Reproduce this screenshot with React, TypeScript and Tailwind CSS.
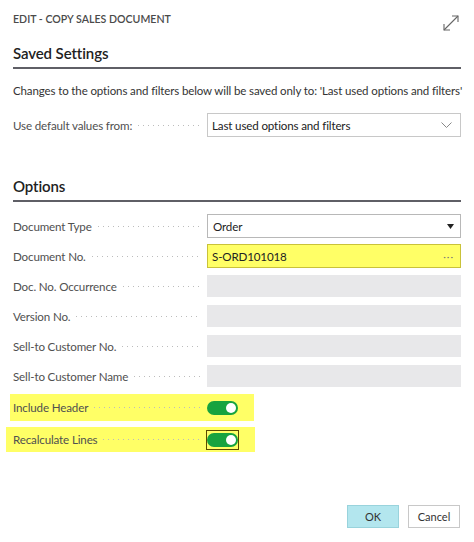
import React from "react";

const font = { fontFamily: 'Lato, "Noto Sans", sans-serif' };

const Leader = () => (
  <div className="flex-1 h-px mx-[6px] bg-[repeating-linear-gradient(90deg,#bcbcbc_0_1px,transparent_1px_5px)]" />
);

const Label = ({ text }: { text: string }) => (
  <div className="flex items-center w-[194px] shrink-0 text-[11.6px] tracking-[-0.15px] text-[#505050] whitespace-nowrap">
    <span>{text}</span>
    <Leader />
  </div>
);

const Heading = ({ text }: { text: string }) => (
  <div className="border-b-2 border-[#5f5f66] pb-[3px] text-[15px] leading-[22px] tracking-[-0.1px] text-[#212121] font-semibold">
    {text}
  </div>
);

const Toggle = ({ focused }: { focused?: boolean }) => (
  <div
    className={`flex items-center justify-center w-[33px] h-[20px] -ml-[1px] ${
      focused ? "border border-[#5a4a00]" : ""
    }`}
  >
    <div className="flex items-center justify-end w-[31px] h-[14px] rounded-full bg-[#17a33f] pr-[2px]">
      <div className="w-[10px] h-[10px] rounded-full bg-white" />
    </div>
  </div>
);

const readOnly = ["Doc. No. Occurrence", "Version No.", "Sell-to Customer No.", "Sell-to Customer Name"];

export default function App() {
  return (
    <div className="w-[474px] h-[542px] bg-white px-[13px] pt-[10px] overflow-hidden" style={font}>
      <div className="flex items-start justify-between">
        <div className="text-[10.6px] font-semibold text-[#4a4a4a] pt-[2px]">EDIT - COPY SALES DOCUMENT</div>
        <svg width="18" height="18" viewBox="0 0 18 18" className="mt-[4px] mr-[1px]" fill="none" stroke="#666" strokeWidth="1.1">
          <path d="M2 16 L16 2" />
          <path d="M10 2 H16 V8" />
          <path d="M2 10 V16 H8" />
        </svg>
      </div>

      <div className="mt-[10px]">
        <Heading text="Saved Settings" />
      </div>
      <div className="mt-[13px] text-[11.5px] tracking-[-0.12px] text-[#333] whitespace-nowrap">
        Changes to the options and filters below will be saved only to: 'Last used options and filters'
      </div>

      <div className="flex items-center mt-[14px] h-[24px]">
        <Label text="Use default values from:" />
        <div className="flex items-center justify-between flex-1 h-[24px] border border-[#c8c8c8] pl-[4px] pr-[8px] text-[11.6px] tracking-[-0.15px] text-[#222]">
          <span>Last used options and filters</span>
          <svg width="11" height="7" viewBox="0 0 11 7" fill="none" stroke="#888" strokeWidth="1">
            <path d="M0.5 0.5 L5.5 5.5 L10.5 0.5" />
          </svg>
        </div>
      </div>

      <div className="mt-[38px]">
        <Heading text="Options" />
      </div>

      <div className="flex flex-col gap-[6px] mt-[12px]">
        <div className="flex items-center h-[24px]">
          <Label text="Document Type" />
          <div className="flex items-center justify-between flex-1 h-[24px] border border-[#b8b8b8] pl-[5px] pr-[6px] text-[11.6px] tracking-[-0.15px] text-[#222]">
            <span>Order</span>
            <svg width="7" height="5" viewBox="0 0 7 5">
              <path d="M0 0 H7 L3.5 5 Z" fill="#222" />
            </svg>
          </div>
        </div>

        <div className="flex items-center h-[24px]">
          <Label text="Document No." />
          <div className="flex items-center justify-between flex-1 h-[24px] border border-[#c9c23a] bg-[#ffff66] pl-[4px] pr-[6px] text-[11.6px] tracking-[-0.15px] text-[#222]">
            <span>S-ORD101018</span>
            <span className="text-[10px] text-[#777] tracking-[1px]">···</span>
          </div>
        </div>

        {readOnly.map((t) => (
          <div key={t} className="flex items-center h-[24px]">
            <Label text={t} />
            <div className="flex-1 h-[22px] bg-[#e8e8ea]" />
          </div>
        ))}

        <div className="flex items-center h-[27px] w-[244px] -ml-[3px] pl-[3px] bg-[#ffff66]">
          <Label text="Include Header" />
          <Toggle />
        </div>

        <div className="flex items-center h-[25px] w-[249px] -ml-[7px] pl-[7px] bg-[#ffff66]">
          <Label text="Recalculate Lines" />
          <Toggle focused />
        </div>
      </div>

      <div className="flex justify-end gap-[9px] mt-[53px] pr-[1px]">
        <button className="w-[52px] h-[23px] bg-[#b3e6ee] border border-[#99d3dc] text-[11px] text-[#333]">OK</button>
        <button className="w-[52px] h-[23px] bg-white border border-[#c8c8c8] text-[11px] text-[#333]">Cancel</button>
      </div>
    </div>
  );
}
